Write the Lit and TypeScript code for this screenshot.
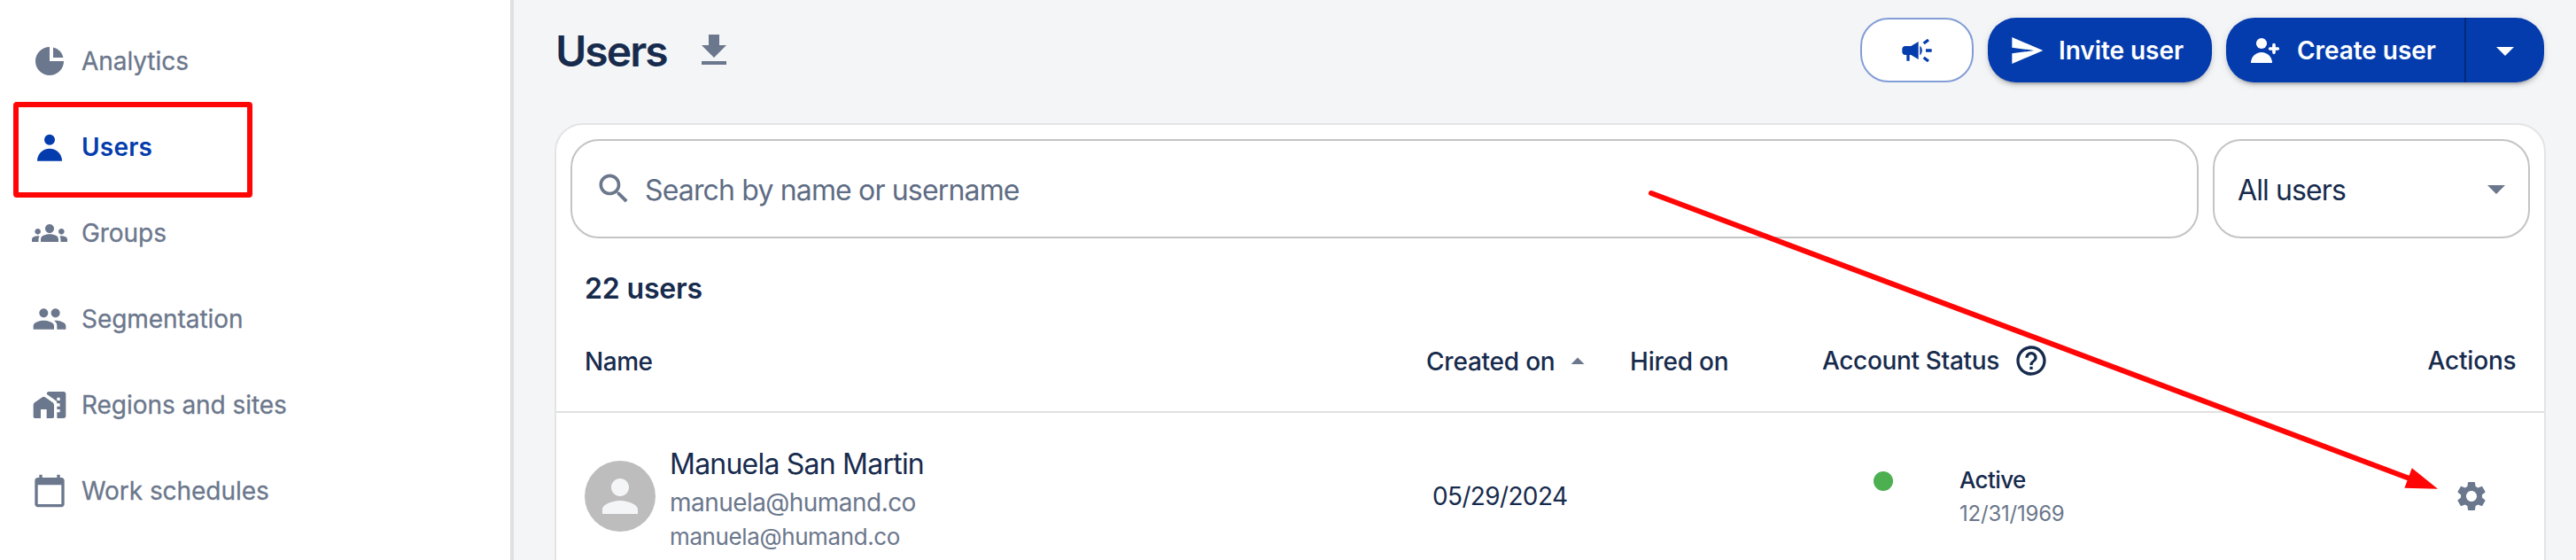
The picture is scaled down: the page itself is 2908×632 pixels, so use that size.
import { LitElement, html, css, svg, TemplateResult } from "lit";
import { customElement, property } from "lit/decorators.js";

const ICONS: Record<string, TemplateResult> = {
  pie: svg`<path d="M12 2.4A9.6 9.6 0 1 0 21.6 12H12z"/><path d="M14.4 2.75V9.6h6.9A9.6 9.6 0 0 0 14.4 2.75z"/>`,
  user: svg`<circle cx="12" cy="7" r="3.6"/><path d="M3.6 21.4a8.4 8.4 0 0 1 16.8 0z"/>`,
  groups: svg`<path d="M12 12.75c1.63 0 3.07.39 4.24.9 1.08.48 1.76 1.56 1.76 2.73V18H6v-1.61c0-1.18.68-2.26 1.76-2.73 1.17-.52 2.61-.91 4.24-.91zM4 13c1.1 0 2-.9 2-2s-.9-2-2-2-2 .9-2 2 .9 2 2 2zm1.13 1.1c-.37-.06-.74-.1-1.13-.1-.99 0-1.93.21-2.78.58C.48 14.9 0 15.62 0 16.43V18h4.5v-1.61c0-.83.23-1.61.63-2.29zM20 13c1.1 0 2-.9 2-2s-.9-2-2-2-2 .9-2 2 .9 2 2 2zm4 3.43c0-.81-.48-1.53-1.22-1.85-.85-.37-1.79-.58-2.78-.58-.39 0-.76.04-1.13.1.4.68.63 1.46.63 2.29V18H24v-1.57zM12 6c1.66 0 3 1.34 3 3s-1.34 3-3 3-3-1.34-3-3 1.34-3 3-3z"/>`,
  people: svg`<path d="M16 11c1.66 0 2.99-1.34 2.99-3S17.66 5 16 5s-3 1.34-3 3 1.34 3 3 3zm-8 0c1.66 0 2.99-1.34 2.99-3S9.66 5 8 5 5 6.34 5 8s1.34 3 3 3zm0 2c-2.33 0-7 1.17-7 3.5V19h14v-2.5c0-2.33-4.67-3.5-7-3.5zm8 0c-.29 0-.62.02-.97.05 1.16.84 1.97 1.97 1.97 3.45V19h6v-2.5c0-2.33-4.67-3.5-7-3.5z"/>`,
  homework: svg`<path d="M1 12.03V20a1 1 0 0 0 1 1h4v-6h4v6h4a1 1 0 0 0 1-1v-7.97a2 2 0 0 0-.84-1.63L9.16 6.83a2 2 0 0 0-2.32 0L1.84 10.4A2 2 0 0 0 1 12.03z"/><path d="M21.5 3h-9.98A1.5 1.5 0 0 0 10.1 4.6l.3.4 5.9 4.2c.44.4.7.9.7 1.8h2v2h-2v2h2v2h-2v4h4.5c.83 0 1.5-.67 1.5-1.5v-15c0-.83-.67-1.5-1.5-1.5zM19 9h-2V7h2z"/>`,
  calendar: svg`<path d="M20 3h-1V1h-2v2H7V1H5v2H4c-1.1 0-2 .9-2 2v16c0 1.1.9 2 2 2h16c1.1 0 2-.9 2-2V5c0-1.1-.9-2-2-2zm0 18H4V8h16v13z"/>`,
  download: svg`<path d="M19 9h-4V3H9v6H5l7 7 7-7zM5 18v2h14v-2H5z"/>`,
  campaign: svg`<path d="M18 11v2h4v-2h-4zM16 17.61c.96.71 2.21 1.65 3.2 2.39.4-.53.8-1.07 1.2-1.6-.99-.74-2.24-1.68-3.2-2.4-.4.54-.8 1.08-1.2 1.61zM20.4 5.6c-.4-.53-.8-1.07-1.2-1.6-.99.74-2.24 1.68-3.2 2.4.4.53.8 1.07 1.2 1.6.96-.72 2.21-1.65 3.2-2.4zM4 9c-1.1 0-2 .9-2 2v2c0 1.1.9 2 2 2h1v4h2v-4h1l5 3V6L8 9H4zM15.5 12c0-1.33-.58-2.53-1.5-3.35v6.69c.92-.81 1.5-2.01 1.5-3.34z"/>`,
  send: svg`<path d="M2.01 21 23 12 2.01 3 2 10l15 2-15 2z"/>`,
  userAdd: svg`<circle cx="9.6" cy="7.2" r="3.65"/><path d="M2.4 20.4a7.2 7.2 0 0 1 14.4 0z"/><path d="M18 8.2v5.2M15.4 10.8h5.2" stroke="currentColor" stroke-width="2.2" stroke-linecap="round"/>`,
  caret: svg`<path d="m7 10 5 5 5-5z"/>`,
  caretUp: svg`<path d="m7 14 5-5 5 5z"/>`,
  search: svg`<path d="M15.5 14h-.79l-.28-.27C15.41 12.59 16 11.11 16 9.5 16 5.91 13.09 3 9.5 3S3 5.91 3 9.5 5.91 16 9.5 16c1.61 0 3.09-.59 4.23-1.57l.27.28v.79l5 4.99L20.49 19l-4.99-5zm-6 0C7.01 14 5 11.99 5 9.5S7.01 5 9.5 5 14 7.01 14 9.5 11.99 14 9.5 14z"/>`,
  help: svg`<path d="M11 18h2v-2h-2v2zm1-16C6.48 2 2 6.48 2 12s4.48 10 10 10 10-4.48 10-10S17.52 2 12 2zm0 18c-4.41 0-8-3.59-8-8s3.59-8 8-8 8 3.59 8 8-3.59 8-8 8zm0-14c-2.21 0-4 1.79-4 4h2c0-1.1.9-2 2-2s2 .9 2 2c0 2-3 1.75-3 5h2c0-2.25 3-2.5 3-5 0-2.21-1.79-4-4-4z"/>`,
  person: svg`<path d="M12 12c2.21 0 4-1.79 4-4s-1.79-4-4-4-4 1.79-4 4 1.79 4 4 4zm0 2c-2.67 0-8 1.34-8 4v2h16v-2c0-2.66-5.33-4-8-4z"/>`,
  settings: svg`<path d="M19.14 12.94c.04-.3.06-.61.06-.94 0-.32-.02-.64-.07-.94l2.03-1.58c.18-.14.23-.41.12-.61l-1.92-3.32c-.12-.22-.37-.29-.59-.22l-2.39.96c-.5-.38-1.03-.7-1.62-.94l-.36-2.54c-.04-.24-.24-.41-.48-.41h-3.84c-.24 0-.43.17-.47.41l-.36 2.54c-.59.24-1.13.57-1.62.94l-2.39-.96c-.22-.08-.47 0-.59.22L2.74 8.87c-.12.21-.08.47.12.61l2.03 1.58c-.05.3-.09.63-.09.94s.02.64.07.94l-2.03 1.58c-.18.14-.23.41-.12.61l1.92 3.32c.12.22.37.29.59.22l2.39-.96c.5.38 1.03.7 1.62.94l.36 2.54c.05.24.24.41.48.41h3.84c.24 0 .44-.17.47-.41l.36-2.54c.59-.24 1.13-.56 1.62-.94l2.39.96c.22.08.47 0 .59-.22l1.92-3.32c.12-.22.07-.47-.12-.61l-2.01-1.58zM12 15.6c-1.98 0-3.6-1.62-3.6-3.6s1.62-3.6 3.6-3.6 3.6 1.62 3.6 3.6-1.62 3.6-3.6 3.6z"/>`,
};

@customElement("ui-icon")
export class UiIcon extends LitElement {
  @property() name = "";
  static styles = css`
    :host { display: block; flex: none; width: 40px; height: 40px; }
    svg { display: block; width: 100%; height: 100%; fill: currentColor; }
  `;
  render() {
    return html`<svg viewBox="0 0 24 24" aria-hidden="true">${ICONS[this.name]}</svg>`;
  }
}

const NAV = [
  { label: "Analytics", icon: "pie" },
  { label: "Users", icon: "user", active: true },
  { label: "Groups", icon: "groups" },
  { label: "Segmentation", icon: "people" },
  { label: "Regions and sites", icon: "homework" },
  { label: "Work schedules", icon: "calendar" },
];

@customElement("side-nav")
export class SideNav extends LitElement {
  static styles = css`
    :host { display: block; box-sizing: border-box; width: 580px; flex: none; padding-top: 20px; background: #fff; border-right: 4px solid #e0e0e0; }
    .item { display: flex; align-items: center; gap: 16px; height: 97px; padding-left: 36px; box-sizing: border-box; color: #6b778c; font-size: 28px; line-height: 40px; letter-spacing: -0.002em; -webkit-text-stroke: 0.3px currentColor; }
    .item span { padding-top: 1px; }
    .active { color: #043cad; font-weight: 600; letter-spacing: 0.008em; -webkit-text-stroke: 0; }
  `;
  render() {
    return html`${NAV.map(
      (n) => html`<div class="item ${n.active ? "active" : ""}"><ui-icon name=${n.icon}></ui-icon><span>${n.label}</span></div>`
    )}`;
  }
}

@customElement("app-root")
export class AppRoot extends LitElement {
  static styles = css`
    :host { display: flex; position: relative; width: 2908px; height: 632px; overflow: hidden; background: #f4f5f7; color: #172b4d; font-family: Inter, "Liberation Sans", sans-serif; font-size: 28px; line-height: 40px; white-space: nowrap; }
    * { box-sizing: border-box; }
    .main { flex: 1; min-width: 0; padding: 20px 34px 0 46px; }
    .top { display: flex; align-items: center; height: 73px; padding: 0 2px 0 1px; }
    h1 { margin: 0; font-size: 48px; line-height: 60px; font-weight: 600; letter-spacing: -0.041em; padding-top: 3px; }
    .download { width: 48px; height: 48px; margin-left: 29px; color: #6b778c; }
    .actions { display: flex; gap: 16px; margin-left: auto; height: 73px; }
    .btn { display: flex; align-items: center; border-radius: 32px; font-weight: 600; letter-spacing: -0.002em; }
    .outlined { width: 128px; justify-content: center; background: #fff; border: 2px solid #839dd7; color: #043cad; }
    .solid { background: #043cad; color: #fff; box-shadow: 0 6px 2px -4px rgba(0,0,0,.16), 0 4px 4px rgba(0,0,0,.1), 0 2px 10px rgba(0,0,0,.1); }
    .part { display: flex; align-items: center; gap: 16px; height: 73px; padding: 0 0 0 24px; }
    .invite { width: 253px; }
    .create { width: 271px; border-right: 2px solid #032a79; }
    .drop { display: flex; justify-content: center; width: 88px; }
    .drop ui-icon { width: 48px; height: 48px; }
    .card { margin-top: 46px; height: 560px; background: #fff; border: 2px solid #e3e4e6; border-radius: 32px; }
    .filters { display: flex; gap: 16px; padding: 16px 16px 0; height: 128px; }
    .field { display: flex; align-items: center; height: 112px; border: 2px solid #c4c4c4; border-radius: 32px; font-size: 32px; }
    .field span { padding-top: 3px; }
    .search { flex: 1; padding-left: 25px; gap: 13px; color: #5e6c84; letter-spacing: -0.0263em; }
    .search ui-icon { width: 44px; height: 44px; color: #6b778c; }
    .select { width: 358px; justify-content: space-between; padding: 0 12px 0 26px; letter-spacing: -0.028em; }
    .select ui-icon { width: 48px; height: 48px; color: #6b778c; }
    .count { height: 83px; padding: 31px 0 0 32px; font-size: 32px; line-height: 52px; font-weight: 600; letter-spacing: -0.005em; }
    .row { display: grid; grid-template-columns: 950px 230px 217px 1fr 164px; align-items: center; padding-left: 32px; }
    .head { height: 114px; border-bottom: 2px solid #e0e0e0; font-weight: 500; letter-spacing: -0.008em; }
    .cell { display: flex; align-items: center; }
    .sort { width: 36px; height: 36px; margin-left: 8px; color: #6b778c; }
    .name-h { letter-spacing: -0.017em; }
    .account { padding-bottom: 3px; letter-spacing: -0.012em; gap: 16px; }
    .center { justify-content: center; }
    .actions-h { padding: 0 0 3px 1px; letter-spacing: -0.006em; }
    .body { height: 188px; }
    .avatar { display: grid; place-items: center; width: 80px; height: 80px; margin-right: 16px; border-radius: 50%; background: #bdbdbd; color: #f4f5f7; }
    .avatar ui-icon { width: 60px; height: 60px; }
    .person { padding-top: 3px; }
    .name { font-size: 32px; line-height: 48px; letter-spacing: -0.0244em; padding-top: 1px; }
    .mail { line-height: 39px; color: #6b778c; letter-spacing: -0.0195em; }
    .small { font-size: 26px; line-height: 38px; letter-spacing: -0.015em; }
    .date { padding-left: 7px; letter-spacing: -0.023em; }
    .status { padding-left: 58px; gap: 75px; }
    .dot { width: 22px; height: 22px; margin-bottom: 34px; border-radius: 50%; background: #4caf50; }
    .state { font-size: 26px; font-weight: 500; line-height: 40px; letter-spacing: -0.0237em; }
    .since { font-size: 24px; line-height: 36px; letter-spacing: -0.009em; color: #6b778c; }
    .gear { color: #6b778c; }
    .highlight { position: absolute; left: 15px; top: 115px; width: 270px; height: 108px; border: 6px solid #ff0505; border-radius: 4px; }
    .arrow { position: absolute; left: 0; top: 0; width: 2908px; height: 632px; }
  `;

  render() {
    return html`
      <side-nav></side-nav>
      <main class="main">
        <header class="top">
          <h1>Users</h1>
          <ui-icon class="download" name="download"></ui-icon>
          <div class="actions">
            <div class="btn outlined"><ui-icon name="campaign"></ui-icon></div>
            <div class="btn solid"><div class="part invite"><ui-icon name="send"></ui-icon><span>Invite user</span></div></div>
            <div class="btn solid">
              <div class="part create"><ui-icon name="userAdd"></ui-icon><span>Create user</span></div>
              <div class="drop"><ui-icon name="caret"></ui-icon></div>
            </div>
          </div>
        </header>
        <section class="card">
          <div class="filters">
            <div class="field search"><ui-icon name="search"></ui-icon><span>Search by name or username</span></div>
            <div class="field select"><span>All users</span><ui-icon name="caret"></ui-icon></div>
          </div>
          <div class="count">22 users</div>
          <div class="row head">
            <div class="cell name-h">Name</div>
            <div class="cell">Created on<ui-icon class="sort" name="caretUp"></ui-icon></div>
            <div class="cell">Hired on</div>
            <div class="cell account"><span>Account Status</span><ui-icon name="help"></ui-icon></div>
            <div class="cell center actions-h">Actions</div>
          </div>
          <div class="row body">
            <div class="cell">
              <div class="avatar"><ui-icon name="person"></ui-icon></div>
              <div class="person">
                <div class="name">Manuela San Martin</div>
                <div class="mail">manuela@humand.co</div>
                <div class="mail small">manuela@humand.co</div>
              </div>
            </div>
            <div class="date">05/29/2024</div>
            <div></div>
            <div class="cell status">
              <div class="dot"></div>
              <div>
                <div class="state">Active</div>
                <div class="since">12/31/1969</div>
              </div>
            </div>
            <div class="cell center"><ui-icon class="gear" name="settings"></ui-icon></div>
          </div>
        </section>
      </main>
      <div class="highlight"></div>
      <svg class="arrow" viewBox="0 0 2908 632" fill="#ff0505">
        <path d="M1864 218 2720 540" stroke="#ff0505" stroke-width="6" stroke-linecap="round" />
        <path d="M2752 551.7 2722.8 528.3 2714.4 550.7z" />
      </svg>
    `;
  }
}
